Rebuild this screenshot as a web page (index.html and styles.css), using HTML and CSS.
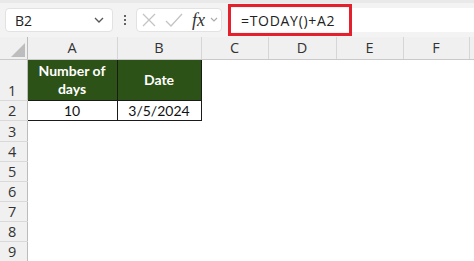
FILE: index.html
```html
<!DOCTYPE html>
<html lang="en">
<head>
  <meta charset="UTF-8">
  <title>TODAY formula</title>
  <link rel="stylesheet" href="styles.css">
</head>
<body>
  <div class="toolbar">
    <div class="namebox">
      <span>B2</span>
      <svg class="chev" width="10" height="6" viewBox="0 0 10 6"><path d="M1 1l4 4 4-4" fill="none" stroke="#555" stroke-width="1.3"/></svg>
    </div>
    <div class="dots"><i></i><i></i><i></i></div>
    <div class="fxbox">
      <svg width="16" height="16" viewBox="0 0 16 16"><path d="M2 2l12 12M14 2L2 14" stroke="#c4c4c4" stroke-width="1.3"/></svg>
      <svg width="18" height="16" viewBox="0 0 18 16"><path d="M1 9l5 5L17 2" fill="none" stroke="#c4c4c4" stroke-width="1.3"/></svg>
      <span class="fx">fx</span>
      <svg width="8" height="6" viewBox="0 0 8 6"><path d="M1 1l3 3 3-3" fill="none" stroke="#aaa" stroke-width="1.1"/></svg>
    </div>
    <div class="formula">
      <div class="highlight">=TODAY()+A2</div>
    </div>
  </div>

  <table class="sheet">
    <colgroup>
      <col class="c-head"><col class="c-a"><col class="c-b"><col class="c-c"><col class="c-d"><col class="c-e"><col class="c-f"><col>
    </colgroup>
    <thead>
      <tr class="r-head">
        <th class="corner"><span class="tri"></span></th>
        <th>A</th><th>B</th><th>C</th><th>D</th><th>E</th><th>F</th><th></th>
      </tr>
    </thead>
    <tbody>
      <tr class="r-tall">
        <td class="rownum">1</td>
        <td class="hdr">Number of days</td>
        <td class="hdr">Date</td>
        <td></td><td></td><td></td><td></td><td></td>
      </tr>
      <tr>
        <td class="rownum">2</td>
        <td class="val">10</td>
        <td class="val">3/5/2024</td>
        <td></td><td></td><td></td><td></td><td></td>
      </tr>
      <tr class="r-21"><td class="rownum">3</td><td></td><td></td><td></td><td></td><td></td><td></td><td></td></tr>
      <tr><td class="rownum">4</td><td></td><td></td><td></td><td></td><td></td><td></td><td></td></tr>
      <tr><td class="rownum">5</td><td></td><td></td><td></td><td></td><td></td><td></td><td></td></tr>
      <tr><td class="rownum">6</td><td></td><td></td><td></td><td></td><td></td><td></td><td></td></tr>
      <tr><td class="rownum">7</td><td></td><td></td><td></td><td></td><td></td><td></td><td></td></tr>
      <tr><td class="rownum">8</td><td></td><td></td><td></td><td></td><td></td><td></td><td></td></tr>
      <tr><td class="rownum">9</td><td></td><td></td><td></td><td></td><td></td><td></td><td></td></tr>
    </tbody>
  </table>
</body>
</html>
```

FILE: styles.css
```css
body {
  margin: 0;
  background: #fff;
  overflow: hidden;
  font-family: "Open Sans", "Noto Sans", sans-serif;
}
.toolbar {
  height: 37px;
  box-sizing: border-box;
  background: #f3f3f3;
  border-top: 3px solid #e9e9e9;
  display: flex;
  align-items: center;
  padding-left: 5px;
}
.namebox {
  width: 108px;
  height: 24px;
  box-sizing: border-box;
  background: #fff;
  border: 1px solid #e2e2e2;
  border-radius: 4px;
  display: flex;
  align-items: center;
  justify-content: space-between;
  padding: 0 8px 0 9px;
  font-size: 14px;
  color: #222;
}
.dots {
  width: 23px;
  display: flex;
  flex-direction: column;
  align-items: center;
  gap: 2px;
}
.dots i {
  width: 2px;
  height: 2px;
  background: #333;
  border-radius: 1px;
}
.fxbox {
  width: 86px;
  height: 24px;
  box-sizing: border-box;
  background: #fff;
  border: 1px solid #e2e2e2;
  border-radius: 4px;
  display: flex;
  align-items: center;
  gap: 8px;
  padding-left: 4px;
}
.fx {
  font-family: "Liberation Serif", serif;
  font-style: italic;
  font-size: 18px;
  color: #333;
  margin-left: 1px;
  margin-right: -3px;
}
.formula {
  flex: 1;
  height: 24px;
  margin-left: 6px;
  background: #fff;
  border-radius: 4px 0 0 4px;
  display: flex;
  align-items: center;
}
.highlight {
  width: 124px;
  height: 32px;
  box-sizing: border-box;
  border: 3px solid #e3202b;
  padding-left: 10px;
  display: flex;
  align-items: center;
  font-size: 14px;
  color: #222;
  letter-spacing: 0.7px;
}
.sheet {
  border-collapse: collapse;
  table-layout: fixed;
  width: 480px;
}
.c-head { width: 27px; }
.c-a { width: 90px; }
.c-b { width: 84px; }
.c-c { width: 67px; }
.c-d { width: 68px; }
.c-e { width: 67px; }
.c-f { width: 66px; }
.sheet th, .sheet td {
  padding: 0;
  height: 20px;
  box-sizing: border-box;
}
.r-head th {
  height: 22px;
  background: #f0f0f0;
  border-bottom: 1px solid #c9c9c9;
  border-right: 1px solid #d6d6d6;
  font-weight: normal;
  font-size: 14.5px;
  color: #333;
  text-align: center;
}
.r-head .corner {
  position: relative;
  border-right: 1px solid #bcbcbc;
}
.tri {
  position: absolute;
  right: 2px;
  bottom: 2px;
  width: 0;
  height: 0;
  border-left: 14px solid transparent;
  border-bottom: 14px solid #bdbdbd;
}
.r-tall td { height: 41px; }
.r-21 td { height: 21px; }
.rownum {
  background: #f0f0f0;
  border-right: 1px solid #bcbcbc;
  border-bottom: 1px solid #d9d9d9;
  font-size: 14.5px;
  color: #333;
  text-align: left;
  padding-left: 8px !important;
  vertical-align: bottom;
  line-height: 19px;
}
.hdr {
  background: #2d5217;
  border: 1px solid #1a1a1a;
  color: #fff;
  font-family: Lato, "Liberation Sans", sans-serif;
  font-weight: bold;
  font-size: 14px;
  line-height: 18px;
  text-align: center;
  padding: 0 10px !important;
}
.val {
  border: 1px solid #1a1a1a;
  font-family: Lato, "Liberation Sans", sans-serif;
  font-size: 14px;
  color: #111;
  text-align: center;
}
```
